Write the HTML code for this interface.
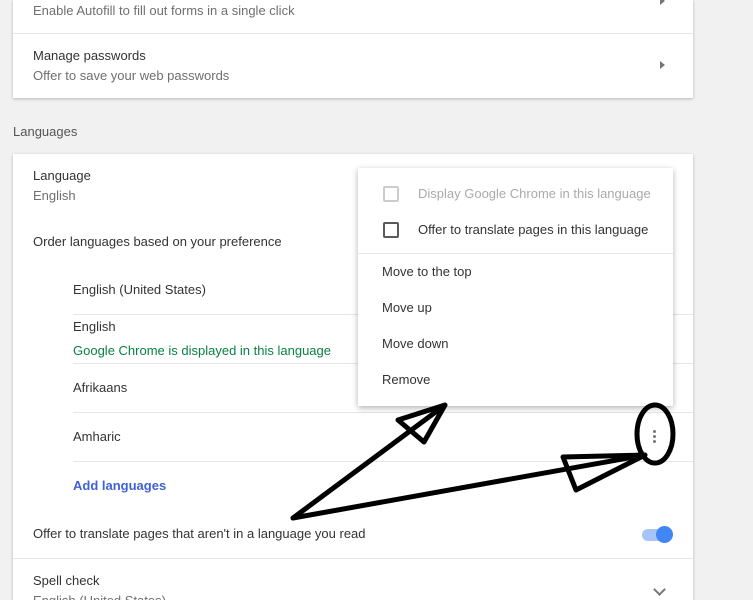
<!DOCTYPE html>
<html><head><style>
html,body{margin:0;width:753px;height:600px;overflow:hidden}
body{background:#f1f1f1;font-family:"Liberation Sans",sans-serif;font-size:13px;color:#333;position:relative}
.a{position:absolute;white-space:nowrap}
.card{position:absolute;left:13px;width:680px;background:#fff;box-shadow:0 1px 3px rgba(0,0,0,.25)}
.hl{position:absolute;height:1px;background:#e6e6e6}
.g{color:#6f6f6f}
.menu{position:absolute;left:358px;top:168px;width:315px;height:238px;background:#fff;box-shadow:0 2px 6px rgba(0,0,0,.3)}
.cb{position:absolute;width:12px;height:12px;border:2px solid #5a5a5a;border-radius:2px}
</style></head><body>
<div class="card" style="top:0;height:98px"></div>
<div class="hl" style="left:13px;top:33px;width:680px"></div>
<div class="a g" style="left:33px;top:3px">Enable Autofill to fill out forms in a single click</div>
<div class="a" style="left:33px;top:48px">Manage passwords</div>
<div class="a g" style="left:33px;top:68px">Offer to save your web passwords</div>
<div class="a" style="left:660px;top:61px;width:0;height:0;border-left:5px solid #777;border-top:4px solid transparent;border-bottom:4px solid transparent"></div>
<div class="a" style="left:660px;top:-3px;width:0;height:0;border-left:5px solid #777;border-top:4px solid transparent;border-bottom:4px solid transparent"></div>
<div class="a" style="left:13px;top:124px;color:#555">Languages</div>
<div class="card" style="top:154px;height:446px"></div>
<div class="a" style="left:33px;top:168px">Language</div>
<div class="a g" style="left:33px;top:188px">English</div>
<div class="a" style="left:33px;top:234px">Order languages based on your preference</div>
<div class="a" style="left:73px;top:282px">English (United States)</div>
<div class="hl" style="left:73px;top:314px;width:620px"></div>
<div class="a" style="left:73px;top:319px">English</div>
<div class="a" style="left:73px;top:343px;color:#0b8043">Google Chrome is displayed in this language</div>
<div class="hl" style="left:73px;top:363px;width:620px"></div>
<div class="a" style="left:73px;top:380px">Afrikaans</div>
<div class="hl" style="left:73px;top:412px;width:620px"></div>
<div class="a" style="left:73px;top:429px">Amharic</div>
<div class="hl" style="left:73px;top:461px;width:620px"></div>
<div class="a" style="left:73px;top:478px;color:#3f62d6;font-weight:bold">Add languages</div>
<div class="a" style="left:33px;top:526px">Offer to translate pages that aren't in a language you read</div>
<div class="a" style="left:642px;top:529px;width:30px;height:12px;border-radius:6px;background:#a7c4f7"></div>
<div class="a" style="left:656px;top:526px;width:17px;height:17px;border-radius:50%;background:#4285f4"></div>
<div class="hl" style="left:13px;top:558px;width:680px"></div>
<div class="a" style="left:33px;top:573px">Spell check</div>
<div class="a g" style="left:33px;top:593px">English (United States)</div>
<div class="a" style="left:655px;top:585px;width:7px;height:7px;border-right:2px solid #777;border-bottom:2px solid #777;transform:rotate(45deg)"></div>
<div class="a" style="left:653px;top:430px;width:3px;height:3px;border-radius:50%;background:#777;box-shadow:0 5px 0 #777,0 10px 0 #777"></div>
<div class="menu">
<div class="cb" style="left:25px;top:18px;border-color:#ccc"></div>
<div class="a" style="left:60px;top:18px;color:#aaa">Display Google Chrome in this language</div>
<div class="cb" style="left:25px;top:54px"></div>
<div class="a" style="left:60px;top:54px">Offer to translate pages in this language</div>
<div class="hl" style="left:0;top:85px;width:315px"></div>
<div class="a" style="left:24px;top:96px">Move to the top</div>
<div class="a" style="left:24px;top:132px">Move up</div>
<div class="a" style="left:24px;top:168px">Move down</div>
<div class="a" style="left:24px;top:204px">Remove</div>
</div>
<svg class="a" style="left:0;top:0" width="753" height="600">
<g fill="none" stroke="#000" stroke-width="5" stroke-linejoin="round" stroke-linecap="round">
<path d="M293 518 L445 405 L424 442 L398 420 L445 405"/>
<path d="M293 518 L645 455 L576 490 L563 457 L645 455"/>
<ellipse cx="655" cy="434" rx="18" ry="29"/>
</g></svg>
</body></html>
